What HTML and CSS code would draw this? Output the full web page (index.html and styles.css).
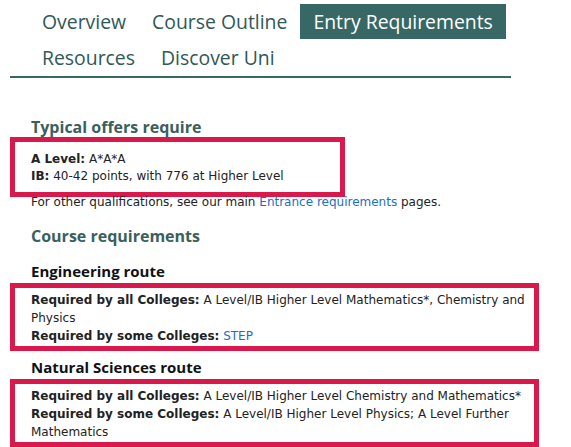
FILE: index.html
```html
<!DOCTYPE html>
<html lang="en">
<head>
<meta charset="UTF-8">
<meta name="viewport" content="width=device-width, initial-scale=1.0">
<title>Entry Requirements</title>
<link rel="stylesheet" href="styles.css">
</head>
<body>
    <div class="page">
        <ul class="tabs">
            <li><a href="#">Overview</a></li>
            <li><a href="#">Course Outline</a></li>
            <li class="active"><a href="#">Entry Requirements</a></li>
            <li><a href="#">Resources</a></li>
            <li><a href="#">Discover Uni</a></li>
        </ul>

        <h2 class="first">Typical offers require</h2>
        <div class="box box-small">
            <p><strong>A Level:</strong> A*A*A</p>
            <p><strong>IB:</strong> 40-42 points, with 776 at Higher Level</p>
        </div>
        <p class="note">For other qualifications, see our main <a href="#">Entrance requirements</a> pages.</p>

        <h2>Course requirements</h2>

        <h3>Engineering route</h3>
        <div class="box">
            <p><strong>Required by all Colleges:</strong> A Level/IB Higher Level Mathematics*, Chemistry and Physics</p>
            <p><strong>Required by some Colleges:</strong> <a href="#">STEP</a></p>
        </div>

        <h3>Natural Sciences route</h3>
        <div class="box">
            <p><strong>Required by all Colleges:</strong> A Level/IB Higher Level Chemistry and Mathematics*</p>
            <p><strong>Required by some Colleges:</strong> A Level/IB Higher Level Physics; A Level Further Mathematics</p>
        </div>
    </div>
</body>
</html>
```

FILE: styles.css
```css
body {
    margin: 0;
    font-family: "DejaVu Sans", Verdana, sans-serif;
    font-size: 12px;
    color: #222;
    background: #fff;
}
.page {
    width: 529px;
    padding-left: 10px;
}
a {
    color: #1a6fc4;
    text-decoration: none;
}
p {
    margin: 0;
}

/* tabs */
.tabs {
    list-style: none;
    margin: 0 28px 0 0;
    padding: 4px 0 1px 19px;
    display: flex;
    flex-wrap: wrap;
    row-gap: 1px;
    border-bottom: 2px solid #376866;
}
.tabs li {
    line-height: 35px;
}
.tabs a {
    display: block;
    padding: 0 13px;
    font-family: "Open Sans", sans-serif;
    font-size: 19.4px;
    color: #2f5856;
}
.tabs .active a {
    background-color: #376866;
    color: #fff;
}

/* headings */
h2 {
    margin: 15px 0 15px;
    padding-left: 21px;
    font-family: "Open Sans", sans-serif;
    font-size: 16px;
    line-height: 20px;
    font-weight: bold;
    color: #3a5f5d;
}
h2.first {
    margin-top: 39px;
    margin-bottom: 0;
}
h3 {
    margin: 6px 0 2px;
    padding-left: 21px;
    font-family: "Open Sans", sans-serif;
    font-size: 15px;
    line-height: 20px;
    font-weight: bold;
    color: #111;
}

/* highlighted boxes */
.box {
    border: 5px solid #d9184b;
    padding: 3px 4px 1px 16px;
    line-height: 18px;
}
.box-small {
    width: 305px;
    padding-top: 9px;
    padding-bottom: 7px;
    line-height: 17px;
}
.note {
    margin-top: -3px;
    padding-left: 21px;
    line-height: 17px;
}
```
